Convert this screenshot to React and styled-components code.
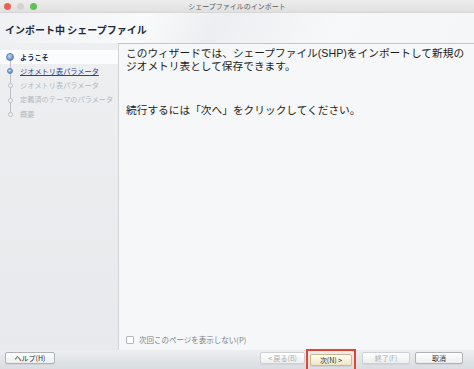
import React from "react";
import styled, { createGlobalStyle } from "styled-components";

const GlobalStyle = createGlobalStyle`
  html, body {
    margin: 0;
    padding: 0;
    background: #e9ebed;
  }
  * { box-sizing: border-box; }
`;

const steps = [
  { label: "ようこそ", state: "current" },
  { label: "ジオメトリ表パラメータ", state: "link" },
  { label: "ジオメトリ表パラメータ", state: "off" },
  { label: "定義済のテーマのパラメータ", state: "off" },
  { label: "概要", state: "off" },
];

const App = () => {
  return (
    <Window>
      <GlobalStyle />
      <TitleBar>
        <Lights>
          <Light color="#ee5f58" />
          <Light color="#d3d3d3" />
          <Light color="#5fc354" />
        </Lights>
        <Title>シェープファイルのインポート</Title>
      </TitleBar>

      <Header>インポート中 シェープファイル</Header>

      <Body>
        <Sidebar>
          {steps.map((s, i) => (
            <Step key={i} state={s.state}>
              <Marker>
                {i > 0 && <Line top />}
                {i < steps.length - 1 && <Line />}
                <Dot state={s.state} />
              </Marker>
              <StepLabel state={s.state}>{s.label}</StepLabel>
            </Step>
          ))}
        </Sidebar>

        <Content>
          <Text>
            <p>
              <Row>このウィザードでは、シェープファイル(SHP)をインポートして新規の</Row>
              <Row>ジオメトリ表として保存できます。</Row>
            </p>
            <p>
              <Row>続行するには「次へ」をクリックしてください。</Row>
            </p>
          </Text>
          <CheckRow>
            <Check />
            <span>次回このページを表示しない(P)</span>
          </CheckRow>
        </Content>
      </Body>

      <Footer>
        <Button w={50}>ヘルプ(H)</Button>
        <Spacer />
        <Button disabled w={45}>&lt; 戻る(B)</Button>
        <Highlight>
          <Button primary w={42}>次(N) &gt;</Button>
        </Highlight>
        <Button disabled w={48} ml={6}>終了(F)</Button>
        <Button w={48} ml={5}>取消</Button>
      </Footer>
    </Window>
  );
};

const Window = styled.div`
  width: 474px;
  height: 369px;
  display: flex;
  flex-direction: column;
  overflow: hidden;
  font-family: "Noto Sans CJK JP", "Noto Sans", sans-serif;
  background: linear-gradient(180deg, #eceef0 0%, #e6e8eb 100%);
`;

const TitleBar = styled.div`
  height: 13px;
  flex-shrink: 0;
  position: relative;
  display: flex;
  align-items: center;
  justify-content: center;
  background: linear-gradient(180deg, #ededed, #e0e0e0);
  border-bottom: 1px solid #d6d6d6;
`;

const Lights = styled.div`
  position: absolute;
  left: 4px;
  top: 3px;
  display: flex;
  gap: 6px;
`;

const Light = styled.span`
  width: 7px;
  height: 7px;
  border-radius: 50%;
  background: ${(p) => p.color};
`;

const Title = styled.span`
  font-size: 7px;
  color: #5a5a5a;
  line-height: 1;
`;

const Header = styled.div`
  height: 30px;
  flex-shrink: 0;
  display: flex;
  align-items: center;
  padding-left: 5px;
  padding-top: 2px;
  font-size: 10px;
  font-weight: 700;
  color: #1f2a38;
  background: linear-gradient(115deg, #eef0f3 0%, #f9fafb 30%, #eceef1 45%, #f7f8fa 70%, #f4f6f8 100%);
`;

const Body = styled.div`
  flex: 1;
  display: flex;
  min-height: 0;
`;

const Sidebar = styled.div`
  width: 118px;
  flex-shrink: 0;
  padding-top: 7px;
  display: flex;
  flex-direction: column;
  background: linear-gradient(180deg, #edeff1 0%, #e7e9ec 100%);
`;

const Step = styled.div`
  height: 14.3px;
  display: flex;
  align-items: center;
  background: ${(p) => (p.state === "current" ? "#fbfcfd" : "transparent")};
`;

const Marker = styled.div`
  width: 20px;
  height: 100%;
  position: relative;
  display: flex;
  align-items: center;
  justify-content: center;
  flex-shrink: 0;
`;

const Line = styled.span`
  position: absolute;
  left: 9.5px;
  width: 1px;
  height: 50%;
  top: ${(p) => (p.top ? "0" : "50%")};
  background: #b9c0c8;
`;

const Dot = styled.span`
  position: relative;
  z-index: 1;
  border-radius: 50%;
  width: ${(p) => (p.state === "current" ? "8px" : p.state === "link" ? "6px" : "5px")};
  height: ${(p) => (p.state === "current" ? "8px" : p.state === "link" ? "6px" : "5px")};
  background: ${(p) =>
    p.state === "off"
      ? "#f2f3f5"
      : "radial-gradient(circle at 40% 35%, #c9dcf2 0%, #6f9bd1 60%, #3f6fb0 100%)"};
  border: 1px solid ${(p) => (p.state === "off" ? "#b8bec6" : "#5a84bd")};
`;

const StepLabel = styled.span`
  font-size: 7.2px;
  line-height: 1;
  white-space: nowrap;
  font-weight: ${(p) => (p.state === "current" ? 700 : 400)};
  color: ${(p) =>
    p.state === "current" ? "#1c2a52" : p.state === "link" ? "#2c3f9c" : "#b4b8bd"};
  text-decoration: ${(p) => (p.state === "link" ? "underline" : "none")};
`;

const Content = styled.div`
  flex: 1;
  display: flex;
  flex-direction: column;
  justify-content: space-between;
  background: #f5f7f8;
  border-top: 1px solid #c3c7cc;
  border-left: 1px solid #d0d4d8;
  padding: 3px 4px 5px 7px;
`;

const Text = styled.div`
  font-family: "Liberation Sans", "Noto Sans CJK JP", sans-serif;
  font-size: 10.7px;
  color: #1d1d1d;
  white-space: nowrap;

  p {
    margin: 0 0 31px 0;
  }
`;

const Row = styled.span`
  display: block;
  height: 13px;
  line-height: 13px;
`;

const CheckRow = styled.label`
  display: flex;
  align-items: center;
  gap: 5px;
  font-size: 7.5px;
  color: #7c7f83;
`;

const Check = styled.span`
  width: 8px;
  height: 8px;
  border: 1px solid #b5b9be;
  background: #fff;
  border-radius: 1px;
`;

const Footer = styled.div`
  height: 19px;
  flex-shrink: 0;
  display: flex;
  align-items: flex-start;
  padding: 2px 11px 0 5px;
  background: linear-gradient(180deg, #eceef0 0%, #d9dce0 100%);
`;

const Spacer = styled.div`
  flex: 1;
`;

const Button = styled.div`
  width: ${(p) => p.w}px;
  margin-left: ${(p) => p.ml || 0}px;
  height: 12px;
  display: flex;
  align-items: center;
  justify-content: center;
  font-size: 7px;
  line-height: 1;
  white-space: nowrap;
  color: ${(p) => (p.disabled ? "#a9adb2" : "#2a2a2a")};
  background: ${(p) =>
    p.primary
      ? "linear-gradient(180deg, #fffdf4, #f0e6c6)"
      : "linear-gradient(180deg, #ffffff, #eceef0)"};
  border: 1px solid ${(p) => (p.disabled ? "#cdd1d5" : p.primary ? "#c9b98c" : "#aeb3b9")};
  border-radius: 2px;
  box-shadow: 0 1px 0 rgba(0, 0, 0, 0.05);
`;

const Highlight = styled.div`
  margin: -3px 0 0 1px;
  padding: 3px 2px 4px 2px;
  border: 2px solid #e0462f;
  display: flex;
`;

export default App;
